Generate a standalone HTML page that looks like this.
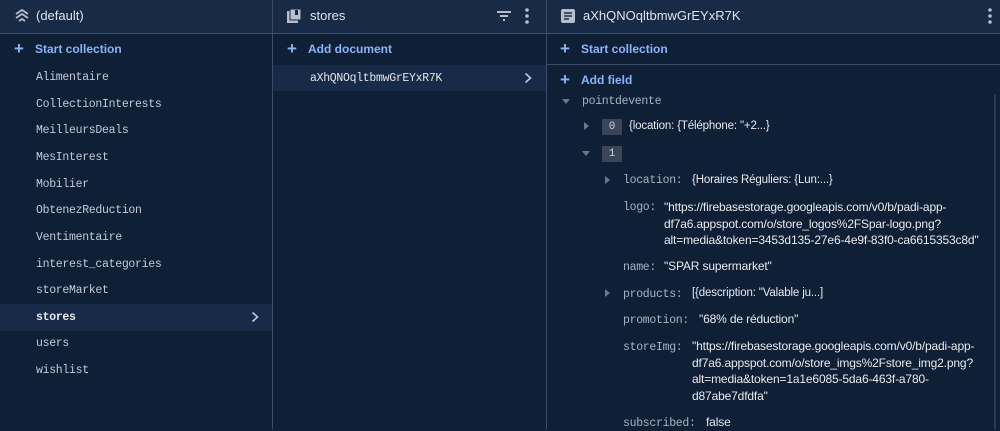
<!DOCTYPE html><html><head><meta charset="utf-8"><style>
*{margin:0;padding:0;box-sizing:border-box}
body{width:1000px;height:429px;overflow:hidden;background:#0f1f36;font-family:"Liberation Sans",sans-serif;position:relative;color:#e3e6ea}
.a{position:absolute;white-space:nowrap}
.hdr{position:absolute;top:0;height:34px;background:#172a46;border-bottom:1px solid #3b4d68}
.vl{position:absolute;top:0;bottom:0;width:1px;background:#3b4d68}
.m{font-family:"Liberation Mono",monospace;font-size:11.5px;letter-spacing:-0.3px;color:#c3cad6}
.b{color:#8ab4f8;font-weight:bold;font-size:12px}
.h{font-size:13px;color:#dfe3e9}
.k{font-family:"Liberation Mono",monospace;font-size:11.5px;letter-spacing:-0.3px;color:#aab3c0}
.v{font-size:12px;color:#e8eaee;line-height:16.5px;letter-spacing:-0.15px}
.plus{font-size:17px;color:#8ab4f8;font-weight:bold}
.tri{width:0;height:0;position:absolute}
.tr{border-left:5px solid #6b7888;border-top:4px solid transparent;border-bottom:4px solid transparent}
.td{border-top:5px solid #6b7888;border-left:4px solid transparent;border-right:4px solid transparent}
.box{position:absolute;background:#3a4658;color:#c9d0da;font-family:"Liberation Mono",monospace;font-size:11px;width:20px;height:16px;text-align:center;line-height:16px}
</style></head><body>
<div class="hdr" style="left:0;width:1000px"></div>
<div class="vl" style="left:272px"></div>
<div class="vl" style="left:546px"></div>
<div class="a" style="left:547px;top:64px;width:453px;height:1px;background:#3b4d68"></div>
<div class="a" style="left:0;top:304px;width:272px;height:27px;background:#172a47"></div>
<div class="a" style="left:273px;top:65px;width:273px;height:26px;background:#172a47"></div>
<div class="a" style="left:994px;top:95px;width:2px;height:334px;background:#2a3a52"></div>
<svg class="a" style="left:14px;top:8px" width="16" height="16" viewBox="0 0 16 16"><path d="M2 6l6-4 6 4M2 10l6-4 6 4M5 13l3-2 3 2" stroke="#b7bfcb" stroke-width="1.8" fill="none"/></svg>
<div class="a h" style="left:36px;top:8px">(default)</div>
<svg class="a" style="left:286px;top:8px" width="16" height="16" viewBox="0 0 16 16"><rect x="1" y="3" width="11" height="12" fill="#b7bfcb"/><rect x="4" y="1" width="11" height="11" fill="#b7bfcb" stroke="#172a46" stroke-width="1"/><rect x="9" y="2" width="3" height="5" fill="#172a46"/></svg>
<div class="a h" style="left:310px;top:8px">stores</div>
<svg class="a" style="left:496px;top:9px" width="16" height="14"><path d="M1 3h14M4 7h8M7 11h2" stroke="#b7bfcb" stroke-width="2"/></svg>
<svg class="a" style="left:524px;top:7px" width="6" height="18"><circle cx="3" cy="3" r="1.8" fill="#b7bfcb"/><circle cx="3" cy="9" r="1.8" fill="#b7bfcb"/><circle cx="3" cy="15" r="1.8" fill="#b7bfcb"/></svg>
<svg class="a" style="left:561px;top:9px" width="14" height="14"><rect x="0" y="0" width="14" height="14" rx="2" fill="#b7bfcb"/><path d="M3 4h8M3 7h8M3 10h5" stroke="#172a46" stroke-width="1.5"/></svg>
<div class="a h" style="left:583px;top:8px">aXhQNOqltbmwGrEYxR7K</div>
<svg class="a" style="left:987px;top:7px" width="6" height="18"><circle cx="3" cy="3" r="1.8" fill="#b7bfcb"/><circle cx="3" cy="9" r="1.8" fill="#b7bfcb"/><circle cx="3" cy="15" r="1.8" fill="#b7bfcb"/></svg>
<div class="a plus" style="left:14px;top:39px">+</div><div class="a b" style="left:35px;top:42px">Start collection</div>
<div class="a m" style="left:36px;top:71px">Alimentaire</div>
<div class="a m" style="left:36px;top:98px">CollectionInterests</div>
<div class="a m" style="left:36px;top:124px">MeilleursDeals</div>
<div class="a m" style="left:36px;top:151px">MesInterest</div>
<div class="a m" style="left:36px;top:178px">Mobilier</div>
<div class="a m" style="left:36px;top:204px">ObtenezReduction</div>
<div class="a m" style="left:36px;top:231px">Ventimentaire</div>
<div class="a m" style="left:36px;top:258px">interest_categories</div>
<div class="a m" style="left:36px;top:284px">storeMarket</div>
<div class="a m" style="left:36px;top:311px;color:#e6e9ee;font-weight:bold">stores</div>
<svg class="a" style="left:251px;top:311px" width="8" height="12"><path d="M1.5 1.5l5 4.5-5 4.5" stroke="#c3cad6" stroke-width="1.6" fill="none"/></svg>
<div class="a m" style="left:36px;top:337px">users</div>
<div class="a m" style="left:36px;top:364px">wishlist</div>
<div class="a plus" style="left:287px;top:39px">+</div><div class="a b" style="left:308px;top:42px">Add document</div>
<div class="a m" style="left:310px;top:72px;color:#e0e4ea">aXhQNOqltbmwGrEYxR7K</div>
<svg class="a" style="left:524px;top:72px" width="8" height="12"><path d="M1.5 1.5l5 4.5-5 4.5" stroke="#c3cad6" stroke-width="1.6" fill="none"/></svg>
<div class="a plus" style="left:560px;top:39px">+</div><div class="a b" style="left:581px;top:42px">Start collection</div>
<div class="a plus" style="left:560px;top:70px">+</div><div class="a b" style="left:581px;top:73px">Add field</div>
<div class="tri td" style="left:562px;top:99px"></div>
<div class="a k" style="left:582px;top:95px">pointdevente</div>
<div class="tri tr" style="left:584px;top:122px"></div>
<div class="box" style="left:602px;top:119px">0</div>
<div class="a v" style="left:629px;top:118px;font-size:11.5px">{location: {Téléphone: "+2...}</div>
<div class="tri td" style="left:582px;top:151px"></div>
<div class="box" style="left:602px;top:146px">1</div>
<div class="tri tr" style="left:605px;top:176px"></div>
<div class="a k" style="left:623px;top:174px">location:</div>
<div class="a v" style="left:692px;top:172px;font-size:11.5px">{Horaires Réguliers: {Lun:...}</div>
<div class="a k" style="left:623px;top:201px">logo:</div>
<div class="a v" style="left:664px;top:199px">"https://firebasestorage.googleapis.com/v0/b/padi-app-<br>df7a6.appspot.com/o/store_logos%2FSpar-logo.png?<br>alt=media&amp;token=3453d135-27e6-4e9f-83f0-ca6615353c8d"</div>
<div class="a k" style="left:623px;top:261px">name:</div>
<div class="a v" style="left:664px;top:258px">"SPAR supermarket"</div>
<div class="tri tr" style="left:605px;top:289px"></div>
<div class="a k" style="left:623px;top:288px">products:</div>
<div class="a v" style="left:692px;top:285px;font-size:11.5px">[{description: "Valable ju...]</div>
<div class="a k" style="left:623px;top:314px">promotion:</div>
<div class="a v" style="left:699px;top:311px">"68% de réduction"</div>
<div class="a k" style="left:623px;top:341px">storeImg:</div>
<div class="a v" style="left:692px;top:338px">"https://firebasestorage.googleapis.com/v0/b/padi-app-<br>df7a6.appspot.com/o/store_imgs%2Fstore_img2.png?<br>alt=media&amp;token=1a1e6085-5da6-463f-a780-<br>d87abe7dfdfa"</div>
<div class="a k" style="left:623px;top:417px">subscribed:</div>
<div class="a v" style="left:706px;top:414px">false</div>
</body></html>
